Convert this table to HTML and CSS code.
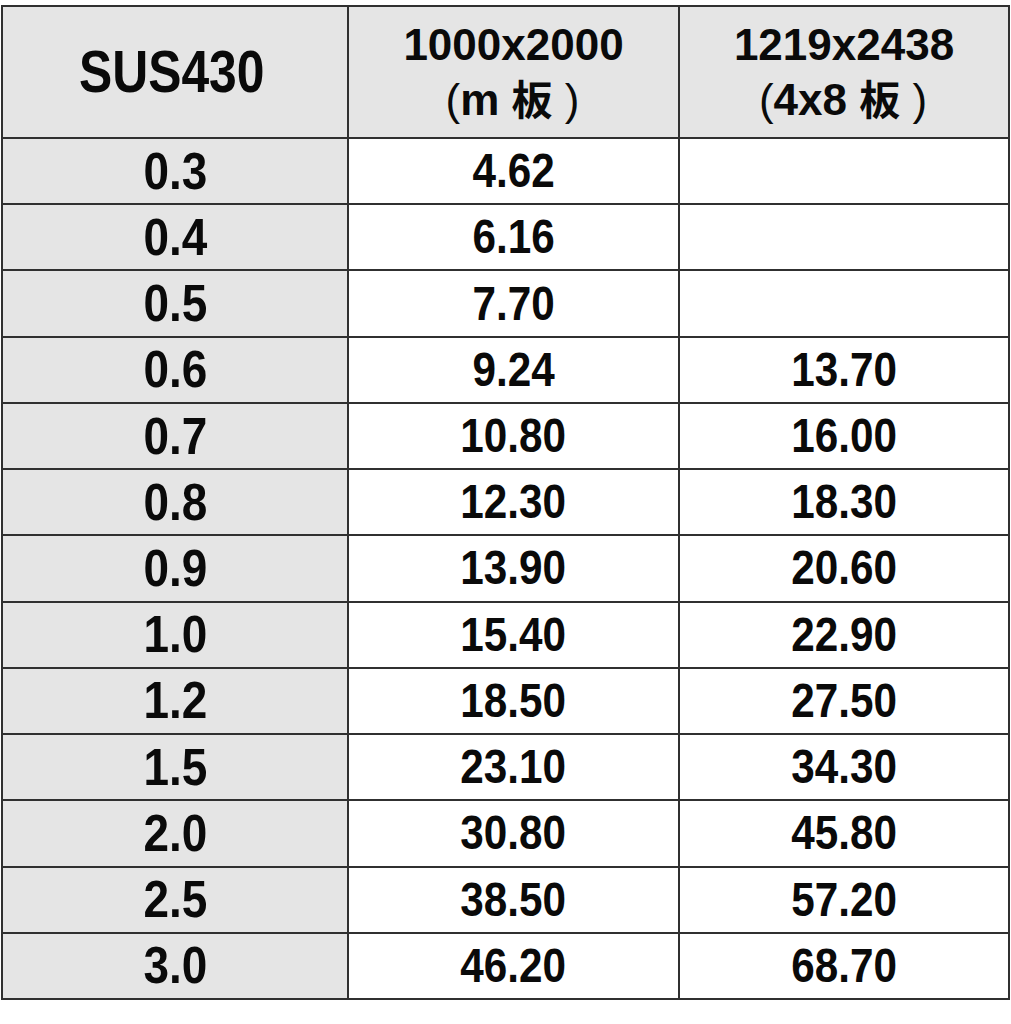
FILE: index.html
```html
<!DOCTYPE html>
<html lang="ja">
<head>
<meta charset="utf-8">
<title>SUS430</title>
<link rel="stylesheet" href="styles.css">
</head>
<body>
<div class="sheet">
  <div class="cell head first"><span class="grade">SUS430</span></div>
  <div class="cell head"><span class="l1">1000x2000</span><span class="l2"><span class="p">(</span>m <span class="cjk">板</span> <span class="p">)</span></span></div>
  <div class="cell head"><span class="l1">1219x2438</span><span class="l2"><span class="p">(</span>4x8 <span class="cjk">板</span> <span class="p">)</span></span></div>

  <div class="cell first"><span class="v">0.3</span></div><div class="cell"><span class="n">4.62</span></div><div class="cell"></div>
  <div class="cell first"><span class="v">0.4</span></div><div class="cell"><span class="n">6.16</span></div><div class="cell"></div>
  <div class="cell first"><span class="v">0.5</span></div><div class="cell"><span class="n">7.70</span></div><div class="cell"></div>
  <div class="cell first"><span class="v">0.6</span></div><div class="cell"><span class="n">9.24</span></div><div class="cell"><span class="n">13.70</span></div>
  <div class="cell first"><span class="v">0.7</span></div><div class="cell"><span class="n">10.80</span></div><div class="cell"><span class="n">16.00</span></div>
  <div class="cell first"><span class="v">0.8</span></div><div class="cell"><span class="n">12.30</span></div><div class="cell"><span class="n">18.30</span></div>
  <div class="cell first"><span class="v">0.9</span></div><div class="cell"><span class="n">13.90</span></div><div class="cell"><span class="n">20.60</span></div>
  <div class="cell first"><span class="v">1.0</span></div><div class="cell"><span class="n">15.40</span></div><div class="cell"><span class="n">22.90</span></div>
  <div class="cell first"><span class="v">1.2</span></div><div class="cell"><span class="n">18.50</span></div><div class="cell"><span class="n">27.50</span></div>
  <div class="cell first"><span class="v">1.5</span></div><div class="cell"><span class="n">23.10</span></div><div class="cell"><span class="n">34.30</span></div>
  <div class="cell first"><span class="v">2.0</span></div><div class="cell"><span class="n">30.80</span></div><div class="cell"><span class="n">45.80</span></div>
  <div class="cell first"><span class="v">2.5</span></div><div class="cell"><span class="n">38.50</span></div><div class="cell"><span class="n">57.20</span></div>
  <div class="cell first"><span class="v">3.0</span></div><div class="cell"><span class="n">46.20</span></div><div class="cell"><span class="n">68.70</span></div>
</div>
</body>
</html>
```
FILE: styles.css
```css
html, body {
  margin: 0;
  padding: 0;
  background: #ffffff;
}

body {
  font-family: "Liberation Sans", Arial, "Noto Sans CJK JP", sans-serif;
  font-weight: bold;
  color: #0a0a0a;
}

.sheet {
  margin: 5px 0 0 1px;
  width: 1007px;
  height: 993px;
  display: grid;
  grid-template-columns: 346px 331px 330px;
  grid-template-rows: 132px repeat(13, 1fr);
  border-top: 2px solid #303030;
  border-left: 2px solid #303030;
  background: #ffffff;
}

.cell {
  border-right: 2px solid #303030;
  border-bottom: 2px solid #303030;
  display: flex;
  flex-direction: column;
  align-items: center;
  justify-content: center;
  overflow: hidden;
}

.head {
  background: #e5e5e5;
}

.first {
  background: #e5e5e5;
}

.grade {
  display: inline-block;
  font-size: 60px;
  line-height: 1;
  transform: scaleX(0.83);
  margin-right: 6px;
}

.l1, .l2 {
  font-size: 44px;
  line-height: 53px;
  white-space: pre;
}

.l2 {
  padding-right: 2px;
}

.p {
  font-weight: normal;
}

.cjk {
  font-family: "Noto Sans CJK JP", sans-serif;
  font-weight: bold;
  font-size: 41px;
}

.v {
  display: inline-block;
  font-size: 51px;
  line-height: 1;
  transform: scaleX(0.9);
}

.n {
  display: inline-block;
  font-size: 48px;
  line-height: 1;
  transform: scaleX(0.88);
}
```
